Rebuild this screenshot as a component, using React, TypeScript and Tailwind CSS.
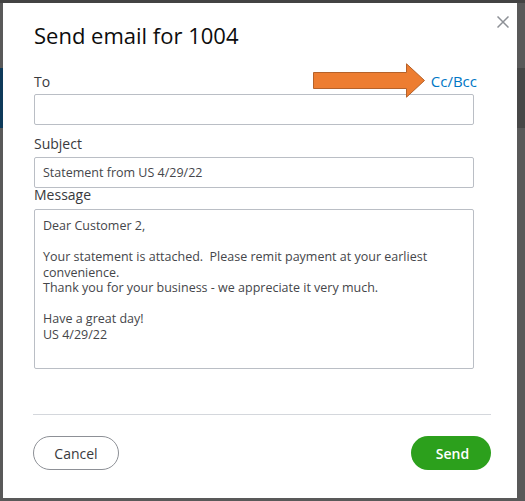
import React from 'react'

const font = { fontFamily: '"Open Sans", "Noto Sans", Arial, sans-serif' }

const message = `Dear Customer 2,

Your statement is attached.  Please remit payment at your earliest convenience.
Thank you for your business - we appreciate it very much.

Have a great day!
US 4/29/22`

export default function App() {
  return (
    <div className="relative w-[525px] h-[501px] bg-[#595959] overflow-hidden" style={font}>
      {/* page behind the overlay */}
      <div className="absolute left-0 top-[68px] w-[3px] h-[60px] bg-[#0e3a5a]" />
      <div className="absolute right-0 top-[68px] w-[8px] h-[60px] bg-[#474747]" />
      <div className="h-[3px] bg-[#434343]" />

      <div className="pl-[3px]">
        <div className="relative w-[514px] h-[495px] bg-white">
          {/* close */}
          <button className="absolute left-[494px] top-[13px] w-[12px] h-[12px]">
            <svg viewBox="0 0 12 12" className="w-[12px] h-[12px]">
              <path d="M0.5 0.5 L11.5 11.5 M11.5 0.5 L0.5 11.5" stroke="#8d9096" strokeWidth="1.5" />
            </svg>
          </button>

          {/* orange arrow annotation */}
          <svg className="absolute left-[310px] top-[60px]" width="113" height="36" viewBox="0 0 113 36">
            <path
              d="M0.5 9.5 H93.5 V0.8 L111.5 17.5 L93.5 34.2 V25.5 H0.5 Z"
              fill="#ed7d31"
              stroke="#b5622a"
              strokeWidth="1"
            />
          </svg>

          <div className="pl-[31px] pt-[18px]">
            <h2 className="text-[22px] leading-[28px] text-[#0d0d0d] font-normal">Send email for 1004</h2>

            <div className="mt-[26px] w-[440px] flex justify-between items-center">
              <label className="text-[14px] leading-[14px] font-medium text-[#393a3d]">To</label>
              <a className="text-[15px] leading-[14px] text-[#0077c5] mr-[-3px] mt-[-3px]">Cc/Bcc</a>
            </div>
            <input
              className="mt-[5px] block w-[440px] h-[31px] border border-[#babec5] rounded-[2px] px-[8px] text-[12.5px] text-[#393a3d] outline-none"
              defaultValue=""
            />

            <label className="mt-[12px] block text-[14px] leading-[14px] font-medium text-[#393a3d]">Subject</label>
            <input
              className="mt-[6px] block w-[440px] h-[31px] border border-[#babec5] rounded-[2px] px-[8px] text-[12.5px] text-[#45464a] outline-none"
              defaultValue="Statement from US 4/29/22"
            />

            <label className="block text-[14px] leading-[14px] font-medium text-[#393a3d]">Message</label>
            <textarea
              className="mt-[7px] block w-[440px] h-[160px] border border-[#babec5] rounded-[2px] px-[8px] pt-[8px] pb-[4px] text-[12.5px] leading-[15.5px] text-[#45464a] resize-none outline-none"
              defaultValue={message}
              readOnly
            />
          </div>

          <div className="ml-[30px] w-[458px] mt-[45px] border-t border-[#d4d7dc]" />

          <div className="ml-[30px] w-[458px] mt-[21px] flex justify-between">
            <button className="w-[86px] h-[34px] rounded-full border border-[#8d9096] text-[14px] font-medium text-[#393a3d]">
              Cancel
            </button>
            <button className="w-[80px] h-[34px] rounded-full bg-[#2ca01c] text-[14px] font-semibold text-white pl-[3px]">
              Send
            </button>
          </div>
        </div>
      </div>
    </div>
  )
}
